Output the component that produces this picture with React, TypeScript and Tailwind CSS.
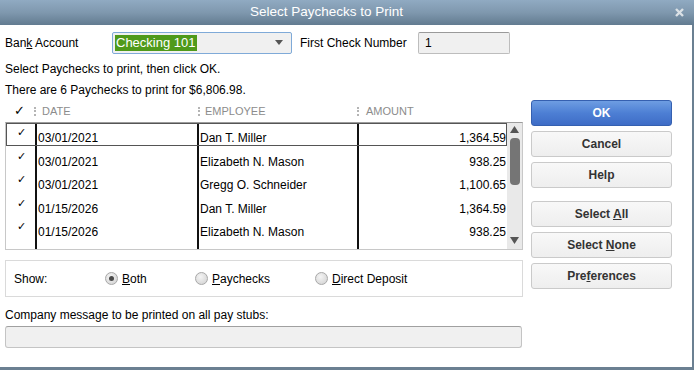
import React from "react";

const rows: [string, string, string][] = [
  ["03/01/2021", "Dan T. Miller", "1,364.59"],
  ["03/01/2021", "Elizabeth N. Mason", "938.25"],
  ["03/01/2021", "Gregg O. Schneider", "1,100.65"],
  ["01/15/2026", "Dan T. Miller", "1,364.59"],
  ["01/15/2026", "Elizabeth N. Mason", "938.25"],
];

function Btn({ children, primary }: { children: React.ReactNode; primary?: boolean }) {
  return (
    <div
      className={
        primary
          ? "h-[26px] w-[141px] rounded-[3px] border border-[#3560b0] bg-[linear-gradient(#6e9de2,#4d7fd4_50%,#3e6cc6)] flex items-center justify-center text-[12px] font-bold text-white"
          : "h-[26px] w-[141px] rounded-[3px] border border-[#cacaca] bg-[linear-gradient(#f8f8f8,#eeeeee)] flex items-center justify-center text-[12px] font-bold text-[#333]"
      }
    >
      <span>{children}</span>
    </div>
  );
}

function Sep() {
  return <span className="inline-block h-[9px] w-0 border-l-2 border-dotted border-[#b4b4b4]" />;
}

function Radio({ checked }: { checked?: boolean }) {
  return (
    <span className="shrink-0 w-[13px] h-[13px] rounded-full border border-[#a8a8a8] bg-[radial-gradient(circle_at_40%_35%,#f4f4f4,#cfcfcf)] flex items-center justify-center">
      {checked && <span className="w-[5px] h-[5px] rounded-full bg-[#4a4a4a]" />}
    </span>
  );
}

export default function App() {
  return (
    <div className="w-[694px] h-[370px] bg-white flex flex-col font-['Liberation_Sans',Arial,sans-serif] text-[12px] text-black overflow-hidden">
      {/* Title bar */}
      <div className="h-[25px] shrink-0 bg-[linear-gradient(#90aac2,#7f98ae_50%,#627b90)] flex items-center">
        <div className="flex-1 text-center text-white text-[13.5px] pr-[22px]">Select Paychecks to Print</div>
        <svg width="9" height="9" viewBox="0 0 9 9" className="mr-[10px]">
          <path d="M1 1L8 8M8 1L1 8" stroke="#dbe1e6" strokeWidth="2.4" />
        </svg>
      </div>

      <div className="flex-1 flex border-r-2 border-b-[3px] border-[#6b8092]">
        {/* Left column */}
        <div className="ml-[5px] w-[518px] flex flex-col">
          {/* Bank account row */}
          <div className="mt-[6px] h-[23px] flex items-center">
            <div className="w-[107px]">
              Ban<span className="underline">k</span> Account
            </div>
            <div className="w-[180px] h-[22px] rounded-[2px] border border-[#7faad8] bg-[#f0f0f0] flex items-center pl-[2px] pr-[8px]">
              <span className="bg-[#4f9a1a] text-white text-[13px] leading-[16px] px-[1px] h-[16px]">Checking 101</span>
              <span className="flex-1" />
              <svg width="8" height="5" viewBox="0 0 8 5">
                <path d="M0 0H8L4 5Z" fill="#555" />
              </svg>
            </div>
            <div className="ml-[8px] w-[118px]">First Check Number</div>
            <div className="w-[92px] h-[22px] rounded-[2px] border border-[#bdbdbd] border-t-[#9a9a9a] bg-[#f0f0f0] flex items-center pl-[6px]">
              1
            </div>
          </div>

          <div className="mt-[8px] leading-[14px]">Select Paychecks to print, then click OK.</div>
          <div className="mt-[7px] leading-[14px]">There are 6 Paychecks to print for $6,806.98.</div>

          {/* Header */}
          <div className="mt-[3px] h-[22px] flex items-center text-[11px] text-[#8c8c8c]">
            <div className="w-[29px] pl-[9px] text-black text-[13px] font-bold font-['DejaVu_Sans',sans-serif]">✓</div>
            <div className="w-[164px] flex items-center">
              <Sep />
              <span className="ml-[6px]">DATE</span>
            </div>
            <div className="w-[159px] flex items-center">
              <Sep />
              <span className="ml-[5px]">EMPLOYEE</span>
            </div>
            <div className="flex-1 flex items-center">
              <Sep />
              <span className="ml-[7px]">AMOUNT</span>
            </div>
          </div>

          {/* Table */}
          <div className="h-[128px] border border-[#c8c8c8] border-t-[#9c9c9c] flex">
            <div className="w-[501px] relative flex">
              <div className="w-[31px] border-r-2 border-[#111]">
                {rows.map((_, i) => (
                  <div key={i} className="h-[23.5px] pl-[11px] pt-[3px] leading-[14px] text-[11px] font-['DejaVu_Sans',sans-serif]">
                    ✓
                  </div>
                ))}
              </div>
              <div className="w-[162px] border-r-2 border-[#111]">
                {rows.map((r, i) => (
                  <div key={i} className="h-[23.5px] pl-[1px] pt-[8px] leading-[14px]">
                    {r[0]}
                  </div>
                ))}
              </div>
              <div className="w-[160px] border-r-2 border-[#111]">
                {rows.map((r, i) => (
                  <div key={i} className="h-[23.5px] pl-[1px] pt-[8px] leading-[14px]">
                    {r[1]}
                  </div>
                ))}
              </div>
              <div className="flex-1">
                {rows.map((r, i) => (
                  <div key={i} className="h-[23.5px] pr-[1px] pt-[8px] leading-[14px] text-right">
                    {r[2]}
                  </div>
                ))}
              </div>
              <div className="absolute left-0 right-0 top-0 h-[23px] border border-[#555]" />
            </div>
            {/* Scrollbar */}
            <div className="w-[15px] bg-[#e9e9e9] flex flex-col items-center">
              <svg width="9" height="7" viewBox="0 0 9 7" className="mt-[3px]">
                <path d="M0 7H9L4.5 0Z" fill="#555" />
              </svg>
              <div className="mt-[5px] w-[10px] h-[47px] rounded-[4px] bg-[#757575]" />
              <div className="flex-1" />
              <svg width="9" height="7" viewBox="0 0 9 7" className="mb-[5px]">
                <path d="M0 0H9L4.5 7Z" fill="#555" />
              </svg>
            </div>
          </div>

          {/* Show box */}
          <div className="mt-[10px] h-[37px] border border-[#dadada] flex items-center">
            <div className="ml-[8px] w-[91px]">Show:</div>
            <Radio checked />
            <span className="ml-[4px] w-[73px]">
              <span className="underline">B</span>oth
            </span>
            <Radio />
            <span className="ml-[4px] w-[103px]">
              <span className="underline">P</span>aychecks
            </span>
            <Radio />
            <span className="ml-[4px]">
              <span className="underline">D</span>irect Deposit
            </span>
          </div>

          <div className="mt-[11px] leading-[14px]">Company message to be printed on all pay stubs:</div>
          <div className="mt-[4px] h-[22px] w-[517px] rounded-[3px] border border-[#c4c4c4] border-t-[#a0a0a0] bg-[#f0f0f0]" />
        </div>

        {/* Right column */}
        <div className="ml-[8px] mt-[75px] flex flex-col gap-[5px]">
          <Btn primary>OK</Btn>
          <Btn>Cancel</Btn>
          <Btn>Help</Btn>
          <div className="h-[3px]" />
          <Btn>
            Select <span className="underline">A</span>ll
          </Btn>
          <Btn>
            Select <span className="underline">N</span>one
          </Btn>
          <Btn>
            Pre<span className="underline">f</span>erences
          </Btn>
        </div>
      </div>
    </div>
  );
}
